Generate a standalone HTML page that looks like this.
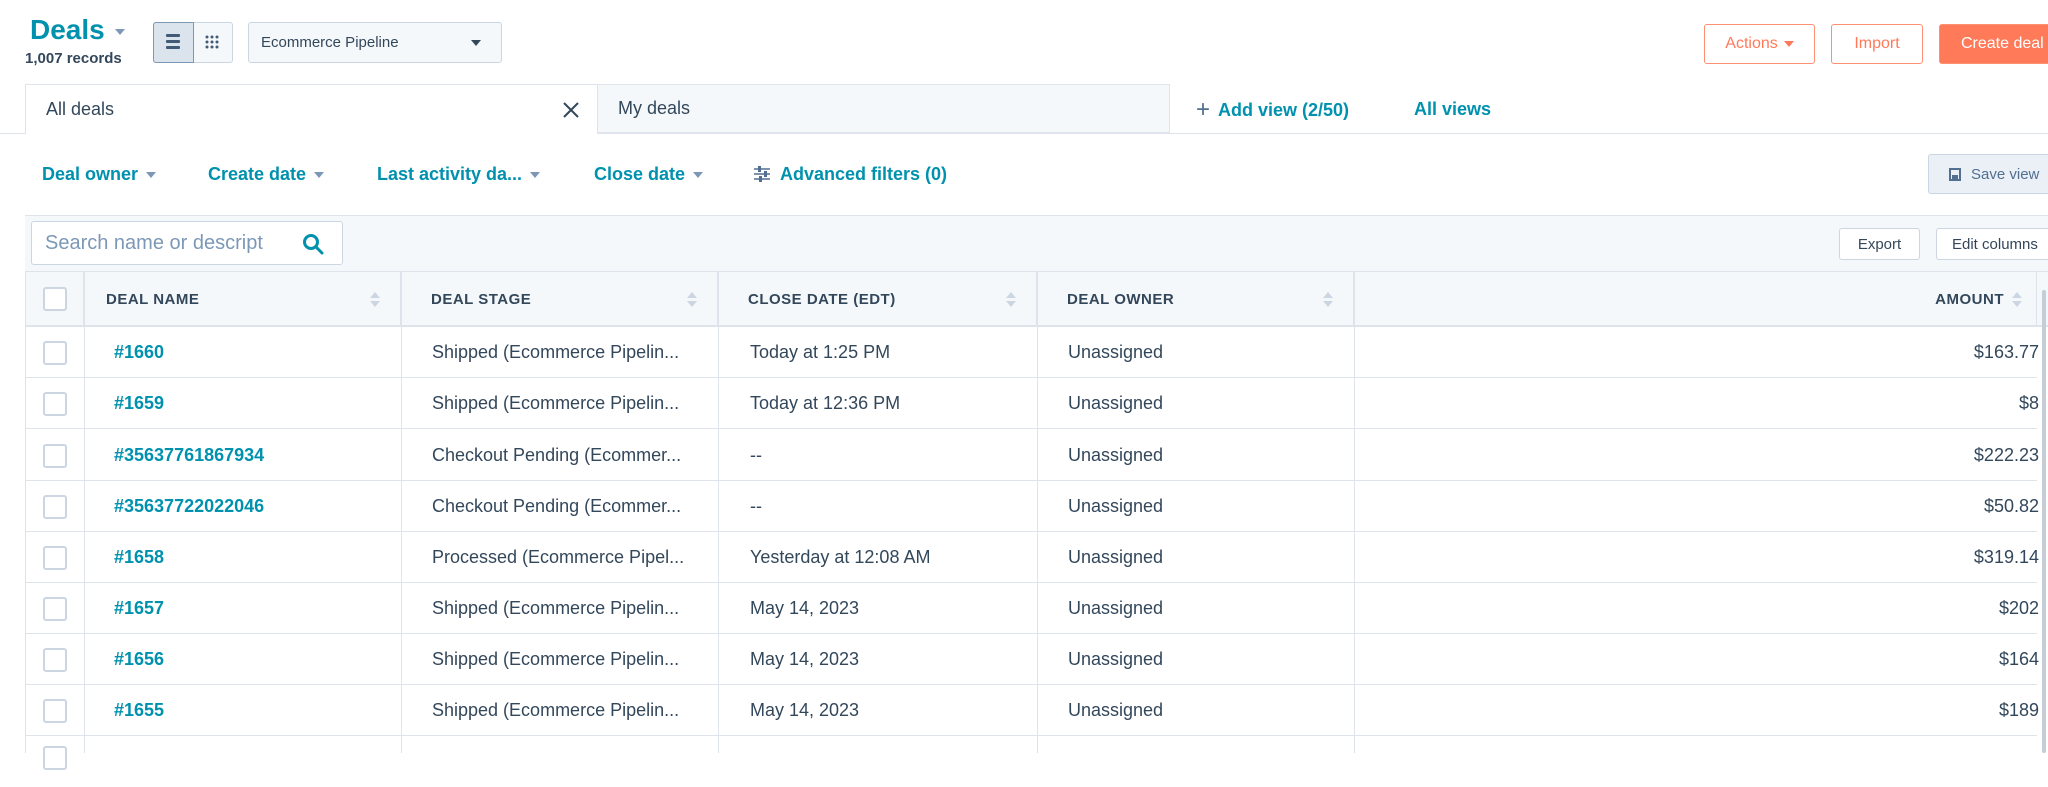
<!DOCTYPE html>
<html><head><meta charset="utf-8"><style>
*{box-sizing:border-box;margin:0;padding:0}
body{width:2048px;height:753px;overflow:hidden;background:#fff;font-family:"Liberation Sans",sans-serif;color:#33475b;position:relative}
.a{position:absolute}
.teal{color:#0091ae;font-weight:bold}
.caret{display:inline-block;width:0;height:0;border-left:5px solid transparent;border-right:5px solid transparent;border-top:6px solid #7c98b6;vertical-align:middle;margin-left:8px}
.btn{position:absolute;border:1px solid #ff8f73;border-radius:3px;color:#ff7a59;font-size:16px;display:flex;align-items:center;justify-content:center}
.gbtn{position:absolute;border:1px solid #cbd6e2;border-radius:3px;background:#fff;font-size:15px;display:flex;align-items:center;justify-content:center;color:#33475b}
.th{position:absolute;top:271px;height:56px;border-right:1px solid #dfe3eb;font-size:15px;font-weight:bold;letter-spacing:.5px;display:flex;align-items:center}
.sort{position:absolute;right:20px;top:21px;width:10px}
.sort:before{content:"";position:absolute;left:0;top:0;border-left:5px solid transparent;border-right:5px solid transparent;border-bottom:6px solid #cbd6e2}
.sort:after{content:"";position:absolute;left:0;top:9px;border-left:5px solid transparent;border-right:5px solid transparent;border-top:6px solid #cbd6e2}
.row{position:absolute;left:25px;width:2012px;height:51px;border-bottom:1px solid #dfe3eb;font-size:18px}
.row div{position:absolute;top:0;height:51px;display:flex;align-items:center}
.cb{width:24px;height:24px;border:2px solid #cbd6e2;border-radius:3px;background:#fff}
.vl{position:absolute;top:271px;height:482px;width:1px;background:#dfe3eb}
</style></head><body>

<div class="a teal" style="left:30px;top:14px;font-size:28px">Deals<span class="caret" style="margin-left:10px;border-top-color:#7c98b6"></span></div>
<div class="a" style="left:25px;top:50px;font-size:15px;font-weight:bold">1,007 records</div>

<div class="a" style="left:153px;top:22px;width:80px;height:41px;border:1px solid #cbd6e2;border-radius:3px;background:#f5f8fa"></div>
<div class="a" style="left:153px;top:22px;width:41px;height:41px;border:1px solid #7c98b6;border-radius:3px 0 0 3px;background:#dbe3ec"></div>
<div class="a" style="left:166px;top:34px;width:14px"><div style="height:3px;background:#425b76;margin-bottom:3px;border-radius:1px"></div><div style="height:3px;background:#425b76;margin-bottom:3px;border-radius:1px"></div><div style="height:3px;background:#425b76;border-radius:1px"></div></div>
<svg class="a" style="left:205px;top:35px" width="14" height="14"><g fill="#425b76"><circle cx="2" cy="2" r="1.5"/><circle cx="7" cy="2" r="1.5"/><circle cx="12" cy="2" r="1.5"/><circle cx="2" cy="7" r="1.5"/><circle cx="7" cy="7" r="1.5"/><circle cx="12" cy="7" r="1.5"/><circle cx="2" cy="12" r="1.5"/><circle cx="7" cy="12" r="1.5"/><circle cx="12" cy="12" r="1.5"/></g></svg>

<div class="a" style="left:248px;top:22px;width:254px;height:41px;border:1px solid #cbd6e2;border-radius:3px;background:#f5f8fa;font-size:15px;padding-left:12px;display:flex;align-items:center">Ecommerce Pipeline<span class="caret" style="position:absolute;right:20px;border-top-color:#33475b"></span></div>

<div class="btn" style="left:1704px;top:24px;width:111px;height:40px">Actions<span class="caret" style="margin-left:6px;border-top-color:#ff7a59"></span></div>
<div class="btn" style="left:1831px;top:24px;width:92px;height:40px">Import</div>
<div class="btn" style="left:1939px;top:24px;width:120px;height:40px;background:#ff7a59;color:#fff;justify-content:flex-start;padding-left:21px">Create deal</div>

<div class="a" style="left:0;top:133px;width:2048px;height:1px;background:#dfe3eb"></div>
<div class="a" style="left:25px;top:84px;width:573px;height:50px;border:1px solid #dfe3eb;border-bottom:none;background:#fff;font-size:18px;padding-left:20px;display:flex;align-items:center">All deals
<svg style="position:absolute;right:18px;top:17px" width="16" height="16"><path d="M1 1L15 15M15 1L1 15" stroke="#33475b" stroke-width="2"/></svg></div>
<div class="a" style="left:597px;top:84px;width:573px;height:49px;border:1px solid #dfe3eb;background:#f5f8fa;font-size:18px;padding-left:20px;display:flex;align-items:center">My deals</div>
<div class="a teal" style="left:1196px;top:95px;font-size:18px"><span style="color:#516f90;font-weight:normal;font-size:24px;position:relative;top:1px;margin-right:8px">+</span>Add view (2/50)</div>
<div class="a teal" style="left:1414px;top:99px;font-size:18px">All views</div>

<div class="a teal" style="left:42px;top:164px;font-size:18px">Deal owner<span class="caret"></span></div>
<div class="a teal" style="left:208px;top:164px;font-size:18px">Create date<span class="caret"></span></div>
<div class="a teal" style="left:377px;top:164px;font-size:18px">Last activity da...<span class="caret"></span></div>
<div class="a teal" style="left:594px;top:164px;font-size:18px">Close date<span class="caret"></span></div>
<svg class="a" style="left:754px;top:166px" width="16" height="16"><g stroke="#516f90" stroke-width="1.6"><path d="M0 3H16M0 8H16M0 13H16"/></g><g fill="#516f90"><rect x="4" y="0" width="3" height="6"/><rect x="10" y="5" width="3" height="6"/><rect x="5" y="10" width="3" height="6"/></g></svg>
<div class="a teal" style="left:780px;top:164px;font-size:18px">Advanced filters (0)</div>

<div class="gbtn" style="left:1928px;top:154px;width:130px;height:40px;background:#eaf0f6;color:#516f90;justify-content:flex-start;padding-left:20px">
<svg width="12" height="13" style="margin-right:10px"><rect x="1" y="1" width="10" height="11" fill="none" stroke="#516f90" stroke-width="2"/><rect x="3" y="7" width="6" height="4" fill="#516f90"/></svg>Save view</div>

<div class="a" style="left:25px;top:215px;width:2023px;height:56px;background:#f5f8fa;border-top:1px solid #dfe3eb"></div>
<div class="a" style="left:31px;top:221px;width:312px;height:44px;background:#fff;border:1px solid #cbd6e2;border-radius:3px;font-size:20px;color:#7c98b6;padding-left:13px;display:flex;align-items:center">Search name or descript
<svg style="position:absolute;right:18px;top:11px" width="22" height="22"><circle cx="9" cy="9" r="6.5" fill="none" stroke="#0091ae" stroke-width="3"/><path d="M14 14L20 20" stroke="#0091ae" stroke-width="3" stroke-linecap="round"/></svg></div>
<div class="gbtn" style="left:1839px;top:228px;width:81px;height:32px">Export</div>
<div class="gbtn" style="left:1936px;top:228px;width:120px;height:32px;justify-content:flex-start;padding-left:15px">Edit columns</div>

<div class="a" style="left:25px;top:271px;width:2023px;height:56px;background:#f5f8fa;border-top:1px solid #dfe3eb;border-bottom:2px solid #dfe3eb"></div>
<div class="th" style="left:25px;width:59px"><div class="cb" style="margin-left:18px"></div></div>
<div class="th" style="left:84px;width:317px;padding-left:22px">DEAL NAME<span class="sort"></span></div>
<div class="th" style="left:401px;width:317px;padding-left:30px">DEAL STAGE<span class="sort"></span></div>
<div class="th" style="left:718px;width:319px;padding-left:30px">CLOSE DATE (EDT)<span class="sort"></span></div>
<div class="th" style="left:1037px;width:317px;padding-left:30px">DEAL OWNER<span class="sort"></span></div>
<div class="th" style="left:1354px;width:683px;justify-content:flex-end;padding-right:32px">AMOUNT<span class="sort" style="right:14px"></span></div>
<div class="a" style="left:2042px;top:290px;width:4px;height:463px;background:#c5cdd6;border-radius:2px"></div>

<div class="vl" style="left:25px"></div><div class="vl" style="left:84px"></div><div class="vl" style="left:401px"></div><div class="vl" style="left:718px"></div><div class="vl" style="left:1037px"></div><div class="vl" style="left:1354px"></div>

<div class="row" style="top:327px"><div style="left:18px"><span class="cb"></span></div><div class="teal" style="left:89px">#1660</div><div style="left:407px">Shipped (Ecommerce Pipelin...</div><div style="left:725px">Today at 1:25 PM</div><div style="left:1043px">Unassigned</div><div style="right:-2px">$163.77</div></div>
<div class="row" style="top:378px"><div style="left:18px"><span class="cb"></span></div><div class="teal" style="left:89px">#1659</div><div style="left:407px">Shipped (Ecommerce Pipelin...</div><div style="left:725px">Today at 12:36 PM</div><div style="left:1043px">Unassigned</div><div style="right:-2px">$8</div></div>
<div class="row" style="top:430px"><div style="left:18px"><span class="cb"></span></div><div class="teal" style="left:89px">#35637761867934</div><div style="left:407px">Checkout Pending (Ecommer...</div><div style="left:725px">--</div><div style="left:1043px">Unassigned</div><div style="right:-2px">$222.23</div></div>
<div class="row" style="top:481px"><div style="left:18px"><span class="cb"></span></div><div class="teal" style="left:89px">#35637722022046</div><div style="left:407px">Checkout Pending (Ecommer...</div><div style="left:725px">--</div><div style="left:1043px">Unassigned</div><div style="right:-2px">$50.82</div></div>
<div class="row" style="top:532px"><div style="left:18px"><span class="cb"></span></div><div class="teal" style="left:89px">#1658</div><div style="left:407px">Processed (Ecommerce Pipel...</div><div style="left:725px">Yesterday at 12:08 AM</div><div style="left:1043px">Unassigned</div><div style="right:-2px">$319.14</div></div>
<div class="row" style="top:583px"><div style="left:18px"><span class="cb"></span></div><div class="teal" style="left:89px">#1657</div><div style="left:407px">Shipped (Ecommerce Pipelin...</div><div style="left:725px">May 14, 2023</div><div style="left:1043px">Unassigned</div><div style="right:-2px">$202</div></div>
<div class="row" style="top:634px"><div style="left:18px"><span class="cb"></span></div><div class="teal" style="left:89px">#1656</div><div style="left:407px">Shipped (Ecommerce Pipelin...</div><div style="left:725px">May 14, 2023</div><div style="left:1043px">Unassigned</div><div style="right:-2px">$164</div></div>
<div class="row" style="top:685px"><div style="left:18px"><span class="cb"></span></div><div class="teal" style="left:89px">#1655</div><div style="left:407px">Shipped (Ecommerce Pipelin...</div><div style="left:725px">May 14, 2023</div><div style="left:1043px">Unassigned</div><div style="right:-2px">$189</div></div>
<div class="row" style="top:736px;border:none"><div style="left:18px;align-items:flex-start;padding-top:10px"><span class="cb"></span></div></div>
</body></html>
